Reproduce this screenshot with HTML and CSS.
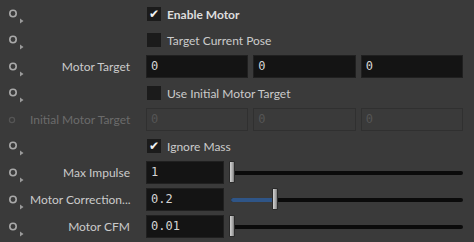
FILE: index.html
```html
<!DOCTYPE html>
<html lang="en">

<head>
    <meta charset="UTF-8">
    <meta name="viewport" content="width=device-width, initial-scale=1.0">
    <title>Motor Parameters</title>
    <link rel="stylesheet" href="styles.css">
</head>

<body>

    <div class="panel">

        <div class="row check-row">
            <svg class="pin" viewBox="0 0 30 26"><circle cx="13" cy="12.5" r="3.2" /><path d="M20 17.5 L23.5 20 L20 22.5 Z" /></svg>
            <span class="label"></span>
            <span class="checkbox checked">&#10004;</span>
            <span class="check-label bold">Enable Motor</span>
        </div>

        <div class="row check-row">
            <svg class="pin" viewBox="0 0 30 26"><circle cx="13" cy="12.5" r="3.2" /><path d="M20 17.5 L23.5 20 L20 22.5 Z" /></svg>
            <span class="label"></span>
            <span class="checkbox"></span>
            <span class="check-label">Target Current Pose</span>
        </div>

        <div class="row field-row">
            <svg class="pin" viewBox="0 0 30 26"><circle cx="13" cy="12.5" r="3.2" /><path d="M20 17.5 L23.5 20 L20 22.5 Z" /></svg>
            <span class="label">Motor Target</span>
            <div class="vector">
                <span class="field">0</span>
                <span class="field">0</span>
                <span class="field">0</span>
            </div>
        </div>

        <div class="row check-row">
            <svg class="pin" viewBox="0 0 30 26"><circle cx="13" cy="12.5" r="3.2" /><path d="M20 17.5 L23.5 20 L20 22.5 Z" /></svg>
            <span class="label"></span>
            <span class="checkbox"></span>
            <span class="check-label">Use Initial Motor Target</span>
        </div>

        <div class="row field-row disabled">
            <svg class="pin" viewBox="0 0 30 26"><circle cx="12" cy="13" r="2.6" /></svg>
            <span class="label">Initial Motor Target</span>
            <div class="vector">
                <span class="field">0</span>
                <span class="field">0</span>
                <span class="field">0</span>
            </div>
        </div>

        <div class="row check-row">
            <svg class="pin" viewBox="0 0 30 26"><circle cx="13" cy="12.5" r="3.2" /><path d="M20 17.5 L23.5 20 L20 22.5 Z" /></svg>
            <span class="label"></span>
            <span class="checkbox checked">&#10004;</span>
            <span class="check-label">Ignore Mass</span>
        </div>

        <div class="row field-row">
            <svg class="pin" viewBox="0 0 30 26"><circle cx="13" cy="12.5" r="3.2" /><path d="M20 17.5 L23.5 20 L20 22.5 Z" /></svg>
            <span class="label">Max Impulse</span>
            <span class="field short">1</span>
            <div class="slider">
                <div class="track"></div>
                <div class="thumb"></div>
            </div>
        </div>

        <div class="row field-row">
            <svg class="pin" viewBox="0 0 30 26"><circle cx="13" cy="12.5" r="3.2" /><path d="M20 17.5 L23.5 20 L20 22.5 Z" /></svg>
            <span class="label">Motor Correction...</span>
            <span class="field short">0.2</span>
            <div class="slider">
                <div class="track"></div>
                <div class="fill" style="width: 46px"></div>
                <div class="thumb" style="left: 43px"></div>
            </div>
        </div>

        <div class="row field-row">
            <svg class="pin" viewBox="0 0 30 26"><circle cx="13" cy="12.5" r="3.2" /><path d="M20 17.5 L23.5 20 L20 22.5 Z" /></svg>
            <span class="label">Motor CFM</span>
            <span class="field short">0.01</span>
            <div class="slider">
                <div class="track"></div>
                <div class="thumb"></div>
            </div>
        </div>

    </div>

</body>

</html>
```

FILE: styles.css
```css
body {
    margin: 0;
    padding: 0;
    background-color: #3a3a3a;
    font-family: 'Lato', 'Open Sans', sans-serif;
    font-size: 12px;
    color: #cbcbcb;
}

.panel {
    width: 474px;
    height: 242px;
    padding-top: 1px;
    box-sizing: border-box;
    overflow: hidden;
}

.row {
    display: flex;
    align-items: center;
    padding-right: 11px;
}

.check-row {
    height: 26px;
}

.field-row {
    height: 27px;
}

.pin {
    width: 30px;
    height: 26px;
    flex: none;
}

.pin circle {
    fill: none;
    stroke: #a9a9a9;
    stroke-width: 1.6;
}

.pin path {
    fill: #9a9a9a;
}

.label {
    width: 100px;
    flex: none;
    margin-right: 16px;
    text-align: right;
    white-space: nowrap;
}

.checkbox {
    width: 14px;
    height: 14px;
    margin-left: 1px;
    margin-right: 6px;
    background-color: #1b1b1b;
    color: #f2f2f2;
    font-family: 'DejaVu Sans', sans-serif;
    font-size: 12px;
    line-height: 14px;
    text-align: center;
}

.check-label {
    white-space: nowrap;
}

.bold {
    font-weight: bold;
    color: #dedede;
}

.vector {
    flex: 1;
    display: flex;
    gap: 5px;
}

.field {
    flex: 1;
    height: 23px;
    box-sizing: border-box;
    padding-left: 4px;
    background-color: #141414;
    border: 1px solid #202020;
    font-family: 'DejaVu Sans Mono', monospace;
    font-size: 12px;
    line-height: 21px;
    color: #d4d4d4;
}

.field.short {
    flex: none;
    width: 78px;
}

.disabled .label {
    color: #6b6b6b;
}

.disabled .pin circle {
    stroke: #555;
    stroke-width: 1.2;
}

.disabled .field {
    background-color: #3a3a3a;
    border-color: #303030;
    color: #555;
}

.slider {
    flex: 1;
    position: relative;
    height: 23px;
    margin-left: 5px;
}

.track {
    position: absolute;
    left: 2px;
    right: 0;
    top: 10px;
    height: 4px;
    border-radius: 2px;
    background-color: #0b0b0b;
}

.fill {
    position: absolute;
    left: 2px;
    top: 10px;
    height: 4px;
    border-radius: 2px;
    background-color: #2f5587;
}

.thumb {
    position: absolute;
    left: 0;
    top: 0;
    width: 6px;
    height: 22px;
    box-sizing: border-box;
    border: 1px solid #2a2a2a;
    border-radius: 1px;
    background: linear-gradient(to right, #d2d2d2, #a8a8a8 60%, #7c7c7c);
}
```
